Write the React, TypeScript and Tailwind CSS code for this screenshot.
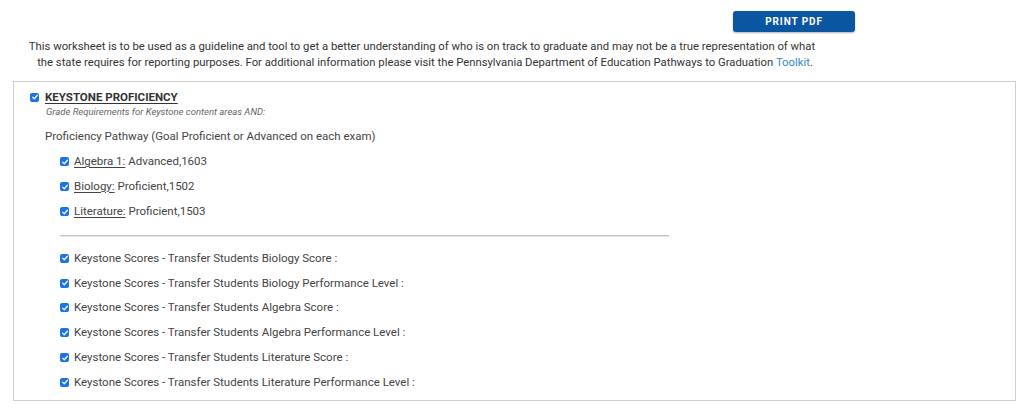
import React from "react";

function Check() {
  return (
    <span className="inline-flex h-[9px] w-[9px] shrink-0 items-center justify-center rounded-[2px] bg-[#1a73e8]">
      <svg viewBox="0 0 10 10" className="h-[8px] w-[8px]">
        <path d="M2 5.2 L4.1 7.2 L8 2.8" fill="none" stroke="white" strokeWidth="1.6" strokeLinecap="round" strokeLinejoin="round" />
      </svg>
    </span>
  );
}

const scores = [
  { label: "Algebra 1:", value: "Advanced,1603" },
  { label: "Biology:", value: "Proficient,1502" },
  { label: "Literature:", value: "Proficient,1503" },
];

const transfer = [
  "Keystone Scores - Transfer Students Biology Score :",
  "Keystone Scores - Transfer Students Biology Performance Level :",
  "Keystone Scores - Transfer Students Algebra Score :",
  "Keystone Scores - Transfer Students Algebra Performance Level :",
  "Keystone Scores - Transfer Students Literature Score :",
  "Keystone Scores - Transfer Students Literature Performance Level :",
];

export default function App() {
  return (
    <div className="h-[411px] w-[1024px] overflow-hidden bg-white font-['Roboto',sans-serif] text-[#444]">
      <div className="flex justify-end pr-[169px] pt-[11px]">
        <button className="flex h-[21px] w-[122px] items-center justify-center rounded-[3px] bg-[#0a56a0] text-[10px] font-bold tracking-[0.09em] text-white shadow-[0_1px_2px_rgba(0,0,0,0.3)]">
          PRINT PDF
        </button>
      </div>
      <div className="ml-[20px] mt-[7px] w-[804px] text-center text-[11.3px] leading-[16px] text-[#333]">
        <div className="whitespace-nowrap">
          This worksheet is to be used as a guideline and tool to get a better understanding of who is on track to graduate and may not be a true representation of what
        </div>
        <div className="whitespace-nowrap pl-[6px]">
          the state requires for reporting purposes. For additional information please visit the Pennsylvania Department of Education Pathways to Graduation{" "}
          <span className="text-[#3a86c8]">Toolkit</span>.
        </div>
      </div>
      <div className="ml-[13px] mt-[10px] h-[320px] w-[1003px] border border-[#cfcfcf] pl-[16px] pt-[7px]">
        <div className="flex items-center gap-[6px]">
          <Check />
          <span className="text-[11.5px] font-bold leading-[16px] text-[#333] underline underline-offset-2">KEYSTONE PROFICIENCY</span>
        </div>
        <div className="ml-[16px] mt-[1px] text-[9.5px] italic leading-[12px] text-[#666]">
          Grade Requirements for Keystone content areas AND:
        </div>
        <div className="ml-[15px] mt-[10px] text-[11.5px] leading-[16px] text-[#444]">
          Proficiency Pathway (Goal Proficient or Advanced on each exam)
        </div>
        <div className="ml-[30px] mt-[5px] flex flex-col">
          {scores.map((s) => (
            <div key={s.label} className="flex h-[25px] items-center gap-[5px] text-[11.5px]">
              <Check />
              <span>
                <span className="underline underline-offset-2">{s.label}</span> {s.value}
              </span>
            </div>
          ))}
        </div>
        <div className="ml-[30px] mt-[11px] h-[2px] w-[609px] border-t border-[#c4c4c4] bg-[#e6e6e6]" />
        <div className="ml-[30px] mt-[9px] flex flex-col">
          {transfer.map((t) => (
            <div key={t} className="flex h-[24.8px] items-center gap-[5px] text-[11.5px]">
              <Check />
              <span>{t}</span>
            </div>
          ))}
        </div>
      </div>
    </div>
  );
}
